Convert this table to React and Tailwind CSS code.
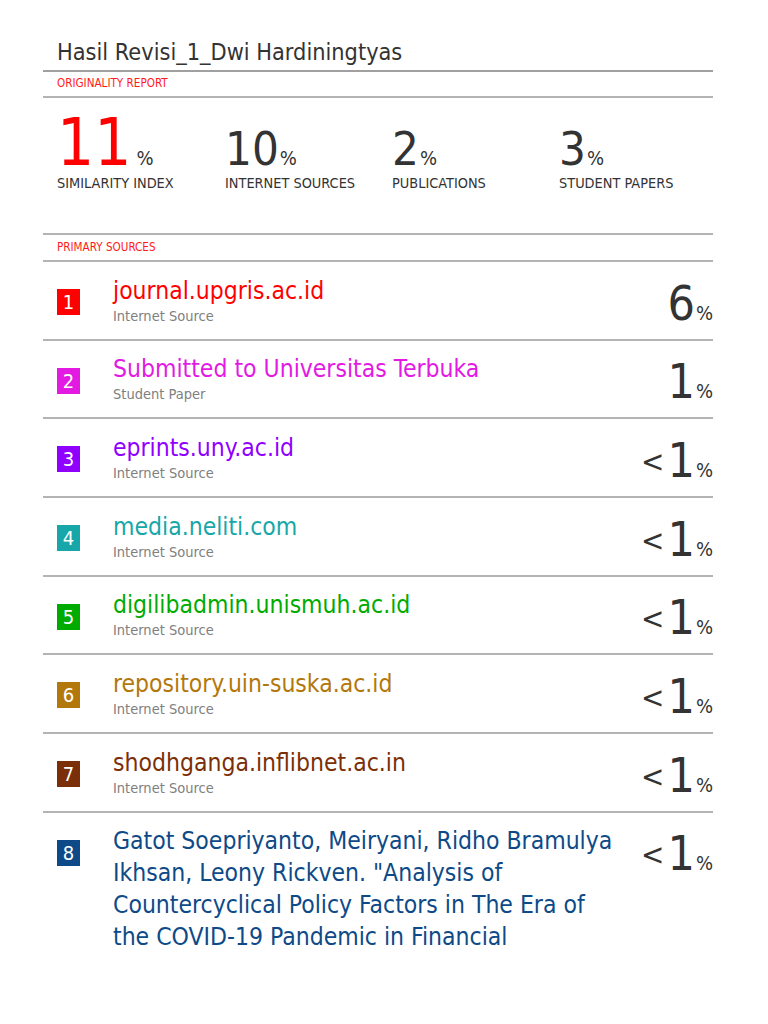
import React from "react";

const FONT = { fontFamily: '"DejaVu Sans Condensed", "Liberation Sans", sans-serif' };

const sources = [
  { n: 1, title: "journal.upgris.ac.id", type: "Internet Source", pct: "6", lt: false, color: "text-[#ff0000]", bg: "bg-[#ff0000]" },
  { n: 2, title: "Submitted to Universitas Terbuka", type: "Student Paper", pct: "1", lt: false, color: "text-[#e21ae2]", bg: "bg-[#e21ae2]" },
  { n: 3, title: "eprints.uny.ac.id", type: "Internet Source", pct: "1", lt: true, color: "text-[#8f00ff]", bg: "bg-[#8f00ff]" },
  { n: 4, title: "media.neliti.com", type: "Internet Source", pct: "1", lt: true, color: "text-[#17a7a9]", bg: "bg-[#17a7a9]" },
  { n: 5, title: "digilibadmin.unismuh.ac.id", type: "Internet Source", pct: "1", lt: true, color: "text-[#00ab00]", bg: "bg-[#00ab00]" },
  { n: 6, title: "repository.uin-suska.ac.id", type: "Internet Source", pct: "1", lt: true, color: "text-[#b3780c]", bg: "bg-[#b3780c]" },
  { n: 7, title: "shodhganga.inflibnet.ac.in", type: "Internet Source", pct: "1", lt: true, color: "text-[#7b2f08]", bg: "bg-[#7b2f08]" },
  {
    n: 8,
    title:
      'Gatot Soepriyanto, Meiryani, Ridho Bramulya Ikhsan, Leony Rickven. "Analysis of Countercyclical Policy Factors in The Era of the COVID-19 Pandemic in Financial',
    type: null,
    pct: "1",
    lt: true,
    color: "text-[#0d4a87]",
    bg: "bg-[#0d4a87]",
  },
];

function Stat({ value, red }) {
  return (
    <div className="flex items-baseline leading-none">
      <span className={`${red ? "text-[65px] text-[#ff0000]" : "text-[47px] text-[#333333]"} leading-none`}>{value}</span>
      <span className={`text-[20px] leading-none text-[#333333] ${red ? "ml-[5px]" : "ml-[1px]"}`}>%</span>
    </div>
  );
}

export default function App() {
  return (
    <div className="min-h-[1024px] w-full bg-white" style={FONT}>
      <div className="ml-[43px] w-[670px]">
        <div className="border-b-2 border-[#a0a0a0] pl-[14px] pt-[39px] pb-[5px] text-[23.3px] leading-[26px] text-[#333333]">
          Hasil Revisi_1_Dwi Hardiningtyas
        </div>
        <div className="flex h-[26px] items-center border-b-2 border-[#b4b4b4] pl-[14px] text-[11.6px] text-[#ff1a1a]">
          ORIGINALITY REPORT
        </div>
        <div className="grid grid-cols-[168px_167px_167px_1fr] items-baseline border-b-2 border-[#b4b4b4] pl-[14px] pt-[12px] pb-[42px]">
          <Stat value="11" red />
          <Stat value="10" />
          <Stat value="2" />
          <Stat value="3" />
          <div className="self-start text-[14.4px] leading-[16px] text-[#333333]">SIMILARITY INDEX</div>
          <div className="self-start text-[14.4px] leading-[16px] text-[#333333]">INTERNET SOURCES</div>
          <div className="self-start text-[14.4px] leading-[16px] text-[#333333]">PUBLICATIONS</div>
          <div className="self-start text-[14.4px] leading-[16px] text-[#333333]">STUDENT PAPERS</div>
        </div>
        <div className="flex h-[27px] items-center border-b-2 border-[#b4b4b4] pl-[14px] text-[11.6px] text-[#ff1a1a]">
          PRIMARY SOURCES
        </div>
        {sources.map((s, i) => (
          <div
            key={s.n}
            className={`flex items-start pt-[12.5px] pb-[12.2px] ${i < sources.length - 1 ? "border-b-2 border-[#b4b4b4]" : ""}`}
          >
            <div className={`ml-[14px] mt-[14.5px] flex h-[26px] w-[23px] shrink-0 items-center justify-center text-[20px] leading-none text-white ${s.bg}`}>
              {s.n}
            </div>
            <div className="ml-[33px] w-[512px]">
              <div className={`text-[24.5px] leading-[32px] ${s.color}`}>{s.title}</div>
              {s.type && <div className="text-[14.5px] leading-[18px] text-[#808080]">{s.type}</div>}
            </div>
            <div className="ml-auto mt-[4px] whitespace-nowrap text-[48px] leading-none text-[#333333]">
              {s.lt && <span className="mr-[3px] align-[5px] text-[31px] leading-none">&lt;</span>}
              <span className="leading-none">{s.pct}</span>
              <span className="ml-[1px] text-[20px] leading-none">%</span>
            </div>
          </div>
        ))}
      </div>
    </div>
  );
}
